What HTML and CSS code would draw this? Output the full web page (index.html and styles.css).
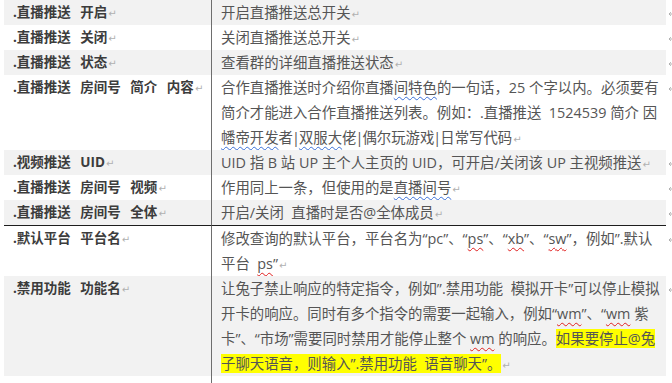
FILE: index.html
```html
<!DOCTYPE html>
<html lang="zh">
<head>
<meta charset="utf-8">
<title>指令表</title>
<link rel="stylesheet" href="styles.css">
</head>
<body>
<div class="doc">
  <div class="row shade">
    <div class="cmd">.直播推送 开启<span class="pm">↵</span></div>
    <div class="desc">开启直播推送总开关<span class="pm">↵</span></div>
    <div class="end"><svg class="em" viewBox="0 0 5 8" width="5" height="8"><path d="M4.5 0.5V5H1M2.8 3.2L1 5l1.8 1.8" /></svg></div>
  </div>
  <div class="row">
    <div class="cmd">.直播推送 关闭<span class="pm">↵</span></div>
    <div class="desc">关闭直播推送总开关<span class="pm">↵</span></div>
    <div class="end"><svg class="em" viewBox="0 0 5 8" width="5" height="8"><path d="M4.5 0.5V5H1M2.8 3.2L1 5l1.8 1.8" /></svg></div>
  </div>
  <div class="row shade">
    <div class="cmd">.直播推送 状态<span class="pm">↵</span></div>
    <div class="desc">查看群的详细直播推送状态<span class="pm">↵</span></div>
    <div class="end"><svg class="em" viewBox="0 0 5 8" width="5" height="8"><path d="M4.5 0.5V5H1M2.8 3.2L1 5l1.8 1.8" /></svg></div>
  </div>
  <div class="row">
    <div class="cmd">.直播推送 房间号 简介 内容<span class="pm">↵</span></div>
    <div class="desc">合作直播推送时介绍你直播<span class="sq-b">间特色</span>的一句话，25 个字以内。必须要有<br>简介才能进入合作直播推送列表。例如：.直播推送&nbsp; 1524539 简介 因<br><span class="sq-b">幡帝开发</span>者<span class="bar">|</span><span class="sq-b">双服大</span>佬<span class="bar">|</span>偶尔玩游戏<span class="bar">|</span>日常写代码<span class="pm">↵</span></div>
    <div class="end"><svg class="em" viewBox="0 0 5 8" width="5" height="8"><path d="M4.5 0.5V5H1M2.8 3.2L1 5l1.8 1.8" /></svg></div>
  </div>
  <div class="row shade">
    <div class="cmd">.视频推送 UID<span class="pm">↵</span></div>
    <div class="desc">UID 指 B 站 UP 主个人主页的 UID，可开启/关闭该 UP 主视频推送<span class="pm">↵</span></div>
    <div class="end"><svg class="em" viewBox="0 0 5 8" width="5" height="8"><path d="M4.5 0.5V5H1M2.8 3.2L1 5l1.8 1.8" /></svg></div>
  </div>
  <div class="row">
    <div class="cmd">.直播推送 房间号 视频<span class="pm">↵</span></div>
    <div class="desc">作用同上一条，但使用的是<span class="sq-b">直播间号</span><span class="pm">↵</span></div>
    <div class="end"><svg class="em" viewBox="0 0 5 8" width="5" height="8"><path d="M4.5 0.5V5H1M2.8 3.2L1 5l1.8 1.8" /></svg></div>
  </div>
  <div class="row shade">
    <div class="cmd">.直播推送 房间号 全体<span class="pm">↵</span></div>
    <div class="desc">开启/关闭&nbsp; 直播时是否@全体成员<span class="pm">↵</span></div>
    <div class="end"><svg class="em" viewBox="0 0 5 8" width="5" height="8"><path d="M4.5 0.5V5H1M2.8 3.2L1 5l1.8 1.8" /></svg></div>
  </div>
  <div class="row ruled">
    <div class="cmd">.默认平台 平台名<span class="pm">↵</span></div>
    <div class="desc">修改查询的默认平台，平台名为“pc”、“<span class="sq-r">ps</span>”、“<span class="sq-r">xb</span>”、“<span class="sq-r">sw</span>”，例如”.默认<br>平台&nbsp; <span class="sq-r">ps</span>”<span class="pm">↵</span></div>
    <div class="end"><svg class="em" viewBox="0 0 5 8" width="5" height="8"><path d="M4.5 0.5V5H1M2.8 3.2L1 5l1.8 1.8" /></svg></div>
  </div>
  <div class="row shade">
    <div class="cmd">.禁用功能 功能名<span class="pm">↵</span></div>
    <div class="desc">让兔子禁止响应的特定指令，例如”.禁用功能&nbsp; 模拟开卡”可以停止模拟<br>开卡的响应。同时有多个指令的需要一起输入，例如“<span class="sq-r">wm</span>”、“<span class="sq-r">wm</span> 紫<br>卡”、“市场”需要同时禁用才能停止整个 <span class="sq-r">wm</span> 的响应。<span class="hl">如果要停止@兔</span><br><span class="hl">子聊天语音，则输入”.禁用功能&nbsp; 语音聊天”。</span><span class="pm">↵</span></div>
    <div class="end"><svg class="em" viewBox="0 0 5 8" width="5" height="8"><path d="M4.5 0.5V5H1M2.8 3.2L1 5l1.8 1.8" /></svg></div>
  </div>
  <div class="row tail">
    <div class="cmd"></div>
    <div class="desc"></div>
    <div class="end"></div>
  </div>
</div>
</body>
</html>
```
FILE: styles.css
```css
html, body {
  margin: 0;
  padding: 0;
  background: #ffffff;
}

.doc {
  margin-left: 4px;
  width: 668px;
  overflow: hidden;
}

.row {
  display: grid;
  grid-template-columns: 207px 455px 6px;
  grid-auto-rows: auto;
}

.row.shade .cmd,
.row.shade .desc {
  background: #f2f2f2;
}

.cmd {
  padding-left: 9px;
  font-family: "Open Sans", "Noto Sans CJK SC", sans-serif;
  font-weight: 700;
  font-size: 13.5px;
  line-height: 25px;
  color: #3c3c3c;
  white-space: nowrap;
  word-spacing: 6px;
}

.desc {
  border-left: 1px solid #6e6e6e;
  padding-left: 9px;
  font-family: "Open Sans", "Noto Sans CJK SC", sans-serif;
  font-size: 14.4px;
  line-height: 25px;
  color: #555555;
  white-space: nowrap;
}

.desc span,
.cmd span {
  line-height: 10px;
}

.end {
  padding-left: 2px;
  padding-top: 9px;
  line-height: 0;
}

.em {
  fill: none;
  stroke: #b0b0b0;
  stroke-width: 1;
}

.ruled .cmd,
.ruled .desc {
  border-top: 1px solid #1e1e1e;
}

.ruled .end {
  padding-top: 10px;
}

.tail {
  height: 8px;
}

.pm {
  font-family: "DejaVu Sans", sans-serif;
  font-size: 10px;
  font-weight: 400;
  color: #b0b0b0;
  margin-left: 1px;
  word-spacing: 0;
}

.bar {
  margin: 0 -1px;
}

.sq-b {
  text-decoration: underline wavy #3a6fd6;
  text-decoration-thickness: 1px;
  text-underline-offset: 3px;
}

.sq-r {
  text-decoration: underline wavy #e02020;
  text-decoration-thickness: 1px;
  text-underline-offset: 3px;
}

.hl {
  background: #ffff00;
}
```
